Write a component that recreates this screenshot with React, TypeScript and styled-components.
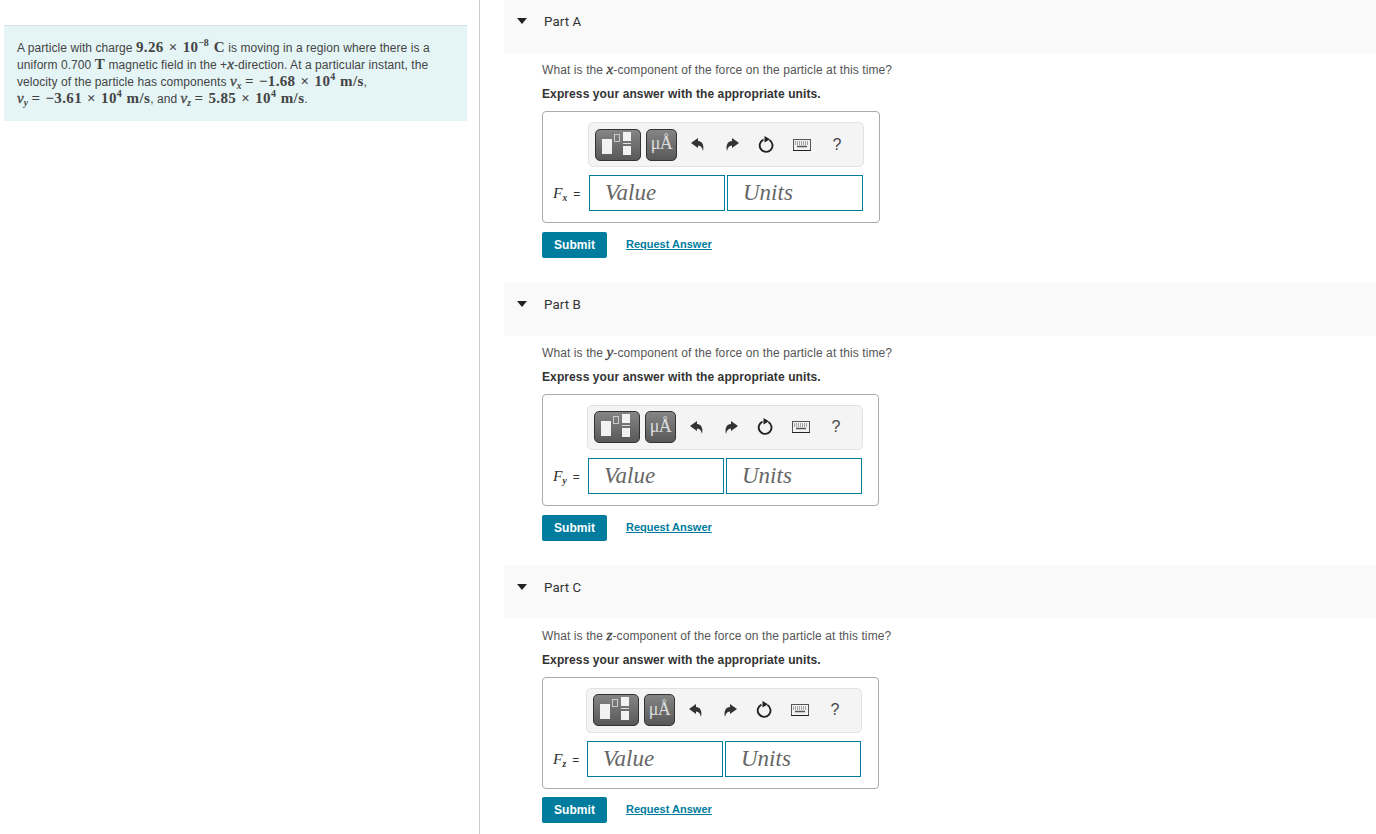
import React from 'react'
import styled, { createGlobalStyle } from 'styled-components'

const GlobalStyle = createGlobalStyle`
  html, body {
    margin: 0;
    padding: 0;
    background: #fff;
    color: #333;
    font-family: 'Liberation Sans', Arial, sans-serif;
    font-size: 12px;
    overflow: hidden;
  }
`

const Page = styled.div`
  display: flex;
  width: 1376px;
  height: 834px;
  overflow: hidden;
`

const Side = styled.aside`
  width: 475px;
  height: 809px;
  flex: none;
  padding: 25px 0 0 4px;
  margin-right: 24px;
  border-right: 1px solid #ccc;
`

const Intro = styled.div`
  width: 463px;
  height: 96px;
  box-sizing: border-box;
  padding: 13px 13px 0;
  background: #e5f5f6;
  border-top: 1px solid #d8e2e6;
  line-height: 16px;
  letter-spacing: 0.07px;
  color: #444;
`

const Parts = styled.main`
  flex: 1;
  min-width: 0;
`

const Part = styled.section`
  height: 282.67px;
`

const PartHeader = styled.header`
  display: flex;
  align-items: flex-start;
  height: 53px;
  padding: 14.2px 0 0 13px;
  box-sizing: border-box;
  background: #f9f9f9;
  font-family: Roboto, sans-serif;
  font-size: 13.3px;
  letter-spacing: 0.1px;
  line-height: 16px;
  color: #333;
`

const Caret = styled.span`
  width: 0;
  height: 0;
  margin: 4px 17px 0 0;
  border-left: 5px solid transparent;
  border-right: 5px solid transparent;
  border-top: 6px solid #222;
`

const PartBody = styled.div`
  padding: 9.3px 0 0 38px;
`

const Question = styled.p`
  margin: 0;
  line-height: 14px;
  letter-spacing: 0.1px;
  color: #555;
`

const Instruction = styled.p`
  margin: 10px 0 10px;
  line-height: 14px;
  font-weight: 700;
  color: #333;
  font-size: 12px;
  letter-spacing: 0.1px;
`

const AnswerBox = styled.div<{ $width: number }>`
  width: ${(p) => p.$width}px;
  height: 112px;
  box-sizing: border-box;
  padding: 10px 0 0 0;
  border: 1px solid #aaa;
  border-radius: 4px;
`

const Toolbar = styled.div<{ $left: number }>`
  display: flex;
  align-items: center;
  width: 276px;
  height: 45px;
  box-sizing: border-box;
  margin-left: ${(p) => p.$left}px;
  padding-left: 6px;
  background: #f4f4f4;
  border: 1px solid #e2e2e2;
  border-radius: 5px;
`

const ToolButton = styled.span<{ $width: number }>`
  display: flex;
  align-items: center;
  justify-content: center;
  width: ${(p) => p.$width}px;
  height: 32px;
  box-sizing: border-box;
  margin-right: 5px;
  padding-bottom: 2px;
  border: 1px solid #333;
  border-radius: 5px;
  background: linear-gradient(#858585, #585858);
  color: #ddd;
  font-family: 'Liberation Serif', serif;
  font-size: 18px;
  letter-spacing: -0.5px;
`

const IconGroup = styled.div`
  display: flex;
  margin-left: -2.5px;
`

const IconSlot = styled.span`
  display: flex;
  align-items: center;
  justify-content: center;
  width: 35px;
  height: 32px;
  color: #444;
  font-size: 16px;
`

const InputRow = styled.div`
  display: flex;
  align-items: center;
  margin-top: 8px;
`

const InputLabel = styled.label<{ $width: number }>`
  width: ${(p) => p.$width}px;
  padding-left: 10px;
  box-sizing: border-box;
  white-space: nowrap;
  font-size: 12px;
  color: #333;
`

const ForceSymbol = styled.i`
  font-family: 'Liberation Serif', serif;
  font-size: 15.5px;
`

const Equals = styled.span`
  margin-left: 6px;
`

const AnswerInput = styled.input`
  width: 136px;
  height: 36px;
  box-sizing: border-box;
  margin: 0 2px 0 0;
  padding: 0 0 0 15px;
  border: 1px solid #007c9e;
  background: #fff;
  border-radius: 0;
  outline: none;
  font-family: 'Liberation Serif', serif;
  font-style: italic;
  font-size: 23px;

  &::placeholder {
    color: #666;
    opacity: 1;
  }
`

const Actions = styled.div`
  display: flex;
  align-items: center;
  margin-top: 8.8px;
`

const SubmitButton = styled.button`
  width: 65px;
  height: 26px;
  padding: 0;
  border: none;
  border-radius: 2px;
  background: #007c9e;
  color: #fff;
  font-family: 'Liberation Sans', Arial, sans-serif;
  font-size: 12px;
  font-weight: 700;
  letter-spacing: 0.05px;
`

const RequestLink = styled.a`
  margin: 0 0 2px 19px;
  color: #007c9e;
  font-size: 11px;
  font-weight: 700;
  text-decoration: underline;
`

const M = styled.span`
  font-family: 'Liberation Serif', serif;
  font-size: 15px;
  font-weight: 700;
  letter-spacing: 0.35px;
  word-spacing: 1px;
  color: #444;
  white-space: nowrap;
`

const V = styled.i`
  font-family: 'Liberation Serif', serif;
  font-size: 15px;
  font-weight: 400;
  -webkit-text-stroke: 0.35px #444;
  color: #444;
`

const Sup = styled.sup`
  font-size: 10px;
  line-height: 0;
  letter-spacing: -0.3px;
`

const Sub = styled.sub`
  font-family: 'Liberation Serif', serif;
  font-size: 9.5px;
  line-height: 0;
  font-style: italic;
  font-weight: 700;
`

function TemplateIcon() {
  return (
    <svg width="44" height="30" viewBox="0 0 44 30" style={{ marginBottom: -2 }}>
      <rect x="6" y="9" width="10" height="15" fill="#f2f2f2" />
      <rect x="18.5" y="4.5" width="5" height="7" fill="none" stroke="#ccc" />
      <rect x="27" y="2" width="8" height="9" fill="#f2f2f2" />
      <rect x="27" y="13" width="8" height="1" fill="#ddd" />
      <rect x="27" y="16" width="8" height="9" fill="#f2f2f2" />
    </svg>
  )
}

function UndoIcon({ flip }: { flip?: boolean }) {
  return (
    <svg width="15" height="15" viewBox="0 0 15 15" style={flip ? { transform: 'scaleX(-1)' } : undefined}>
      <path d="M1 6 L8 1 V4 C12 4 14.5 8 13 14 C12.3 10.5 11 8.6 8 8.4 V11 Z" fill="#333" />
    </svg>
  )
}

function RefreshIcon() {
  return (
    <svg width="16" height="18" viewBox="0 0 16 18" style={{ marginLeft: -2, marginTop: -2 }}>
      <path d="M5.5 4.6 A6.4 6.4 0 1 0 11.5 5" fill="none" stroke="#222" strokeWidth="1.9" />
      <path d="M6.5 1 L12 4.2 L6.5 7.6 Z" fill="#222" />
    </svg>
  )
}

function KeyboardIcon() {
  return (
    <svg width="18" height="12" viewBox="0 0 18 12">
      <rect x="0.5" y="0.5" width="17" height="11" fill="#f2f2f2" stroke="#555" />
      <path d="M2 3h14M2 5h14" stroke="#555" strokeDasharray="1 1" />
      <path d="M4 7.5h10" stroke="#555" strokeWidth="1.5" />
      <path d="M0 11.5h18" stroke="#222" />
    </svg>
  )
}

type PartInfo = {
  name: string
  axis: string
  boxWidth: number
  labelWidth: number
}

const partList: PartInfo[] = [
  { name: 'Part A', axis: 'x', boxWidth: 338, labelWidth: 46 },
  { name: 'Part B', axis: 'y', boxWidth: 337, labelWidth: 45 },
  { name: 'Part C', axis: 'z', boxWidth: 337, labelWidth: 44 }
]

function App() {
  return (
    <Page>
      <GlobalStyle />
      <Side>
        <Intro>
          A particle with charge <M>9.26 × 10<Sup>−8</Sup> C</M> is moving in a region where there is a
          <br />
          uniform 0.700 <M>T</M> magnetic field in the +<V>x</V>-direction. At a particular instant, the
          <br />
          velocity of the particle has components <V>v</V><Sub>x</Sub> <M>= −1.68 × 10<Sup>4</Sup> m/s</M>,
          <br />
          <V>v</V><Sub>y</Sub> <M>= −3.61 × 10<Sup>4</Sup> m/s</M>, and <V>v</V><Sub>z</Sub> <M>= 5.85 × 10<Sup>4</Sup> m/s</M>.
        </Intro>
      </Side>
      <Parts>
        {partList.map((part) => (
          <Part key={part.name}>
            <PartHeader>
              <Caret />
              {part.name}
            </PartHeader>
            <PartBody>
              <Question>
                What is the <V>{part.axis}</V>-component of the force on the particle at this time?
              </Question>
              <Instruction>Express your answer with the appropriate units.</Instruction>
              <AnswerBox $width={part.boxWidth}>
                <Toolbar $left={part.labelWidth - 1}>
                  <ToolButton $width={46}>
                    <TemplateIcon />
                  </ToolButton>
                  <ToolButton $width={31}>μÅ</ToolButton>
                  <IconGroup>
                    <IconSlot>
                      <UndoIcon />
                    </IconSlot>
                    <IconSlot>
                      <UndoIcon flip />
                    </IconSlot>
                    <IconSlot>
                      <RefreshIcon />
                    </IconSlot>
                    <IconSlot>
                      <KeyboardIcon />
                    </IconSlot>
                    <IconSlot>?</IconSlot>
                  </IconGroup>
                </Toolbar>
                <InputRow>
                  <InputLabel $width={part.labelWidth}>
                    <ForceSymbol>F</ForceSymbol>
                    <Sub>{part.axis}</Sub>
                    <Equals>=</Equals>
                  </InputLabel>
                  <AnswerInput placeholder="Value" readOnly />
                  <AnswerInput placeholder="Units" readOnly />
                </InputRow>
              </AnswerBox>
              <Actions>
                <SubmitButton>Submit</SubmitButton>
                <RequestLink href="#">Request Answer</RequestLink>
              </Actions>
            </PartBody>
          </Part>
        ))}
      </Parts>
    </Page>
  )
}

export default App
